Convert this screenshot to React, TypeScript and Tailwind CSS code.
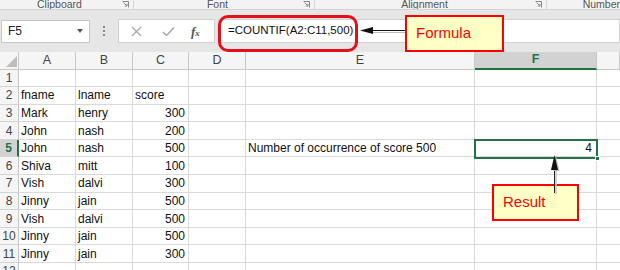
import React from 'react';

type Row = { a: string; b: string; c: string; cNum?: boolean };

const rows: Row[] = [
  { a: '', b: '', c: '' },
  { a: 'fname', b: 'lname', c: 'score' },
  { a: 'Mark', b: 'henry', c: '300', cNum: true },
  { a: 'John', b: 'nash', c: '200', cNum: true },
  { a: 'John', b: 'nash', c: '500', cNum: true },
  { a: 'Shiva', b: 'mitt', c: '100', cNum: true },
  { a: 'Vish', b: 'dalvi', c: '300', cNum: true },
  { a: 'Jinny', b: 'jain', c: '500', cNum: true },
  { a: 'Vish', b: 'dalvi', c: '500', cNum: true },
  { a: 'Jinny', b: 'jain', c: '500', cNum: true },
  { a: 'Jinny', b: 'jain', c: '300', cNum: true },
  { a: '', b: '', c: '' },
];

const cols = ['A', 'B', 'C', 'D', 'E', 'F', ''];

// small dialog launcher glyph in the ribbon group labels
function Launcher() {
  return (
    <svg width="7" height="7" viewBox="0 0 7 7" className="mt-[1px]">
      <path d="M0.5 0.5 H6.5 V6.5" fill="none" stroke="#8a8a8a" strokeWidth="1" />
      <path d="M1.5 1.5 L5 5 M5 2.8 V5 H2.8" fill="none" stroke="#8a8a8a" strokeWidth="1" />
    </svg>
  );
}

function RibbonGroup({ label, width, labelLeft, last }: { label: string; width: string; labelLeft: string; last?: boolean }) {
  return (
    <div className={`flex items-start h-full ${width} ${last ? '' : 'border-r border-[#d6d6d6]'}`}>
      <span className={`${labelLeft} leading-[9px] text-[10.5px] text-[#555]`}>{label}</span>
      {!last && (
        <span className="ml-auto mr-[4px]">
          <Launcher />
        </span>
      )}
    </div>
  );
}

export default function App() {
  return (
    <div className="relative w-[620px] h-[270px] overflow-hidden bg-white font-['Liberation_Sans',Arial,sans-serif]">
      {/* Ribbon group labels */}
      <div className="flex h-[10px] bg-[#f3f3f3] border-b border-[#d4d4d4] overflow-hidden">
        <RibbonGroup label="Clipboard" width="w-[136px]" labelLeft="ml-[37px]" />
        <RibbonGroup label="Font" width="w-[184px]" labelLeft="ml-[73px]" />
        <RibbonGroup label="Alignment" width="w-[235px]" labelLeft="ml-[86px]" />
        <RibbonGroup label="Number" width="flex-1" labelLeft="ml-[36px]" last />
      </div>

      {/* Formula bar */}
      <div className="flex items-center h-[42px] bg-[#e6e6e6]">
        <div className="ml-[1px] w-[89px] h-[23px] bg-white border border-[#c6c6c6] flex items-center">
          <span className="ml-[6px] text-[12px] text-[#222]">F5</span>
          <span className="ml-auto mr-[6px] w-0 h-0 border-l-[3.5px] border-r-[3.5px] border-t-[4px] border-l-transparent border-r-transparent border-t-[#555]" />
        </div>
        <div className="w-[28px] flex flex-col items-center gap-[2px]">
          <span className="w-[2px] h-[2px] bg-[#888]" />
          <span className="w-[2px] h-[2px] bg-[#888]" />
          <span className="w-[2px] h-[2px] bg-[#888]" />
        </div>
        <div className="w-[97px] h-[24px] bg-white border border-[#d0d0d0] flex items-center">
          <svg width="11" height="11" viewBox="0 0 11 11" className="ml-[12px]">
            <path d="M1 1 L10 10 M10 1 L1 10" stroke="#a8a8a8" strokeWidth="1.3" />
          </svg>
          <svg width="13" height="11" viewBox="0 0 13 11" className="ml-[20px]">
            <path d="M1 6 L4.5 9.5 L12 1.5" fill="none" stroke="#a8a8a8" strokeWidth="1.5" />
          </svg>
          <span className="ml-[16px] font-['Liberation_Serif',serif] italic font-bold text-[13px] text-[#555] leading-none">
            f<span className="text-[9px]">x</span>
          </span>
        </div>
        <div className="ml-[3px] flex-1 h-[24px] bg-white border border-[#d0d0d0] flex items-center">
          <span className="ml-[9px] text-[11.5px] text-[#111]">=COUNTIF(A2:C11,500)</span>
        </div>
      </div>

      {/* Sheet */}
      <div className="grid grid-cols-[19px_57px_57px_56px_57px_229px_122px_1fr] text-[12px]">
        {/* header row */}
        <div className="relative h-[17.5px] bg-[#f5f5f5] border-r border-b border-[#c8c8c8]">
          <svg width="19" height="17" viewBox="0 0 19 17" className="absolute inset-0">
            <polygon points="17,4 17,15 6,15" fill="#bdbdbd" />
          </svg>
        </div>
        {cols.map((c, i) =>
          c === 'F' ? (
            <div
              key={i}
              className="h-[17.5px] bg-[#d2d2d2] border-r border-b-2 border-r-[#c8c8c8] border-b-[#217346] flex items-center justify-center text-[12.5px] font-bold text-[#217346]"
            >
              {c}
            </div>
          ) : (
            <div
              key={i}
              className="h-[17.5px] bg-[#f5f5f5] border-r border-b border-[#c8c8c8] flex items-center justify-center text-[12.5px] text-[#444]"
            >
              {c}
            </div>
          )
        )}

        {rows.map((r, idx) => {
          const n = idx + 1;
          const sel = n === 5;
          return (
            <React.Fragment key={n}>
              <div
                className={`h-[17.6px] flex items-center justify-center text-[12px] border-b border-[#d4d4d4] ${
                  sel
                    ? 'bg-[#d2d2d2] text-[#217346] font-bold border-r-2 border-r-[#217346]'
                    : 'bg-[#f5f5f5] text-[#444] border-r border-r-[#c8c8c8]'
                }`}
              >
                {n}
              </div>
              <div className="h-[17.6px] border-r border-b border-[#dadada] flex items-center pl-[2px] text-[#111]">{r.a}</div>
              <div className="h-[17.6px] border-r border-b border-[#dadada] flex items-center pl-[2px] text-[#111]">{r.b}</div>
              <div
                className={`h-[17.6px] border-r border-b border-[#dadada] flex items-center text-[#111] ${
                  r.cNum ? 'justify-end pr-[3px]' : 'pl-[2px]'
                }`}
              >
                {r.c}
              </div>
              <div className="h-[17.6px] border-r border-b border-[#dadada]" />
              <div className="h-[17.6px] border-r border-b border-[#dadada] flex items-center pl-[2px] text-[#111] whitespace-nowrap">
                {sel ? 'Number of occurrence of score 500' : ''}
              </div>
              <div className="h-[17.6px] border-r border-b border-[#dadada] flex items-center justify-end pr-[4px] text-[#111]">
                {sel ? '4' : ''}
              </div>
              <div className="h-[17.6px] border-b border-[#dadada]" />
            </React.Fragment>
          );
        })}
      </div>

      {/* Active cell outline F5 */}
      <div className="absolute left-[474px] top-[139px] w-[124px] h-[20px] border-2 border-[#217346]" />
      <div className="absolute left-[595px] top-[156px] w-[5px] h-[5px] bg-[#217346] border border-white" />

      {/* Red highlight around formula */}
      <div className="absolute left-[218px] top-[15px] w-[140px] h-[37px] rounded-[10px] border-[3px] border-[#e3101a]" />

      {/* Arrow to formula */}
      <svg width="48" height="12" viewBox="0 0 48 12" className="absolute left-[358px] top-[25px]">
        <line x1="12" y1="6.5" x2="47" y2="6.5" stroke="#bbb" strokeWidth="1" transform="translate(0 1)" />
        <line x1="12" y1="5.5" x2="47" y2="5.5" stroke="#111" strokeWidth="1" />
        <polygon points="2,5.5 15,2 15,9" fill="#111" />
      </svg>

      {/* Formula callout */}
      <div className="absolute left-[405px] top-[15px] w-[99px] h-[37px] bg-[#ffffc6] border-2 border-[#ff0000] flex items-center">
        <span className="ml-[9px] text-[15px] text-[#ff0000]">Formula</span>
      </div>

      {/* Result callout */}
      <div className="absolute left-[492px] top-[184px] w-[87px] h-[37px] bg-[#ffffc6] border-2 border-[#ff0000] flex items-center">
        <span className="ml-[9px] text-[15px] text-[#ff0000]">Result</span>
      </div>

      {/* Arrow to result cell */}
      <svg width="16" height="42" viewBox="0 0 16 42" className="absolute left-[547px] top-[153px]">
        <line x1="9" y1="14" x2="9" y2="41" stroke="#c4c4c4" strokeWidth="1.5" />
        <line x1="7.5" y1="12" x2="7.5" y2="40" stroke="#222" strokeWidth="1" />
        <polygon points="7.5,2 11,17 4,17" fill="#bdbdbd" transform="translate(1.5 1)" />
        <polygon points="7.5,2 11,17 4,17" fill="#111" />
      </svg>
    </div>
  );
}
